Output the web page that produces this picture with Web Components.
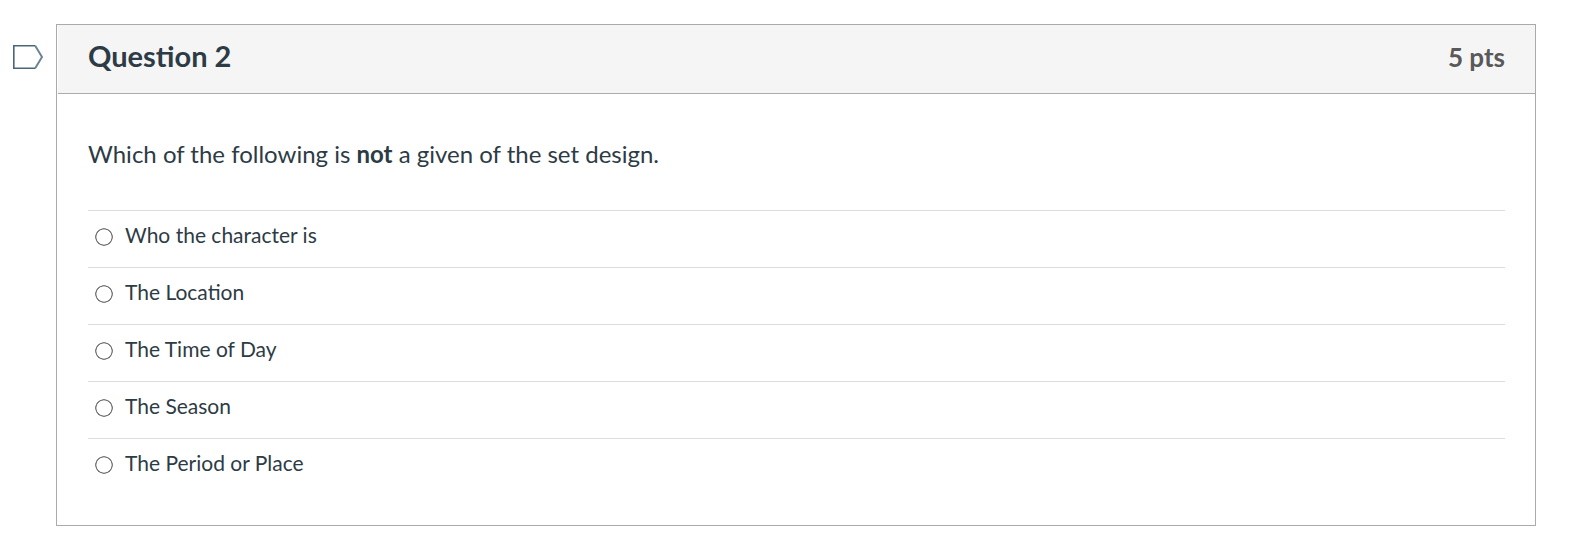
<!DOCTYPE html>
<html lang="en"><head><meta charset="utf-8"><title>Question 2</title>
<style>body{margin:0;background:#fff;font-family:Lato,sans-serif;color:#2d3b45}</style></head><body>
<quiz-question points="5 pts"><span slot="title">Question 2</span>
<span slot="prompt">Which of the following is <b>not</b> a given of the set design.</span>
<quiz-answer>Who the character is</quiz-answer><quiz-answer>The Location</quiz-answer><quiz-answer>The Time of Day</quiz-answer><quiz-answer>The Season</quiz-answer><quiz-answer>The Period or Place</quiz-answer>
</quiz-question>
<script>
class QuizAnswer extends HTMLElement{constructor(){super();this.attachShadow({mode:'open'}).innerHTML=`<style>
:host{display:block;border-top:1px solid #ddd;padding:11px 7px 19px}
label{display:flex;align-items:center;gap:12px;font-size:21px;line-height:26px}
input{appearance:none;flex:none;width:18px;height:18px;margin:4px 0 0;border-radius:50%;background:radial-gradient(closest-side,#fff 81%,#767676 87%,#767676 97%,transparent 100%)}
input:checked{background:radial-gradient(closest-side,#0374b5 50%,#fff 55%,#fff 81%,#0374b5 87%,#0374b5 97%,transparent 100%)}
input:focus-visible{outline:2px solid #0374b5;outline-offset:2px}
</style><label><input type="radio" name="answer"><span><slot></slot></span></label>`;
const i=this.shadowRoot.querySelector('input');i.addEventListener('change',()=>{for(const a of this.parentElement.querySelectorAll('quiz-answer'))if(a!==this)a.shadowRoot.querySelector('input').checked=false})}}
class QuizQuestion extends HTMLElement{constructor(){super();this.attachShadow({mode:'open'}).innerHTML=`<style>
:host{display:flex;align-items:flex-start;gap:13px;padding:24px 46px 33px 13px}
button{flex:none;display:block;margin:21px 0 0;padding:0;border:0;background:none}
svg{display:block}
section{flex:1;min-width:0;border:1px solid #aaa}
header{display:flex;justify-content:space-between;align-items:baseline;margin-left:1px;padding:13px 30px 19px;background:#f5f5f5;border-bottom:1px solid #aaa}
h2{margin:0;font-size:29px;line-height:36px}
.pts{font-size:26px;line-height:32px;font-weight:700;color:#595959}
.body{padding:42px 30px 30px 31px}
.prompt{font-size:24px;line-height:36px;margin-bottom:38px}
</style><button aria-label="Flag question"><svg width="30" height="24" viewBox="0 0 30 24" fill="none" stroke-width="1.6"><path stroke="#4a667a" d="M22.4.8H.8V23.2H22.4"/><path stroke="#6d8494" stroke-width="2" d="M22.2.8L29 12L22.2 23.2"/></svg></button>
<section><header><h2><slot name="title"></slot></h2><span class="pts"></span></header><div class="body"><div class="prompt"><slot name="prompt"></slot></div><slot></slot></div></section>`}
connectedCallback(){this.shadowRoot.querySelector('.pts').textContent=this.getAttribute('points')}}
customElements.define('quiz-answer',QuizAnswer);customElements.define('quiz-question',QuizQuestion);
</script></body></html>
